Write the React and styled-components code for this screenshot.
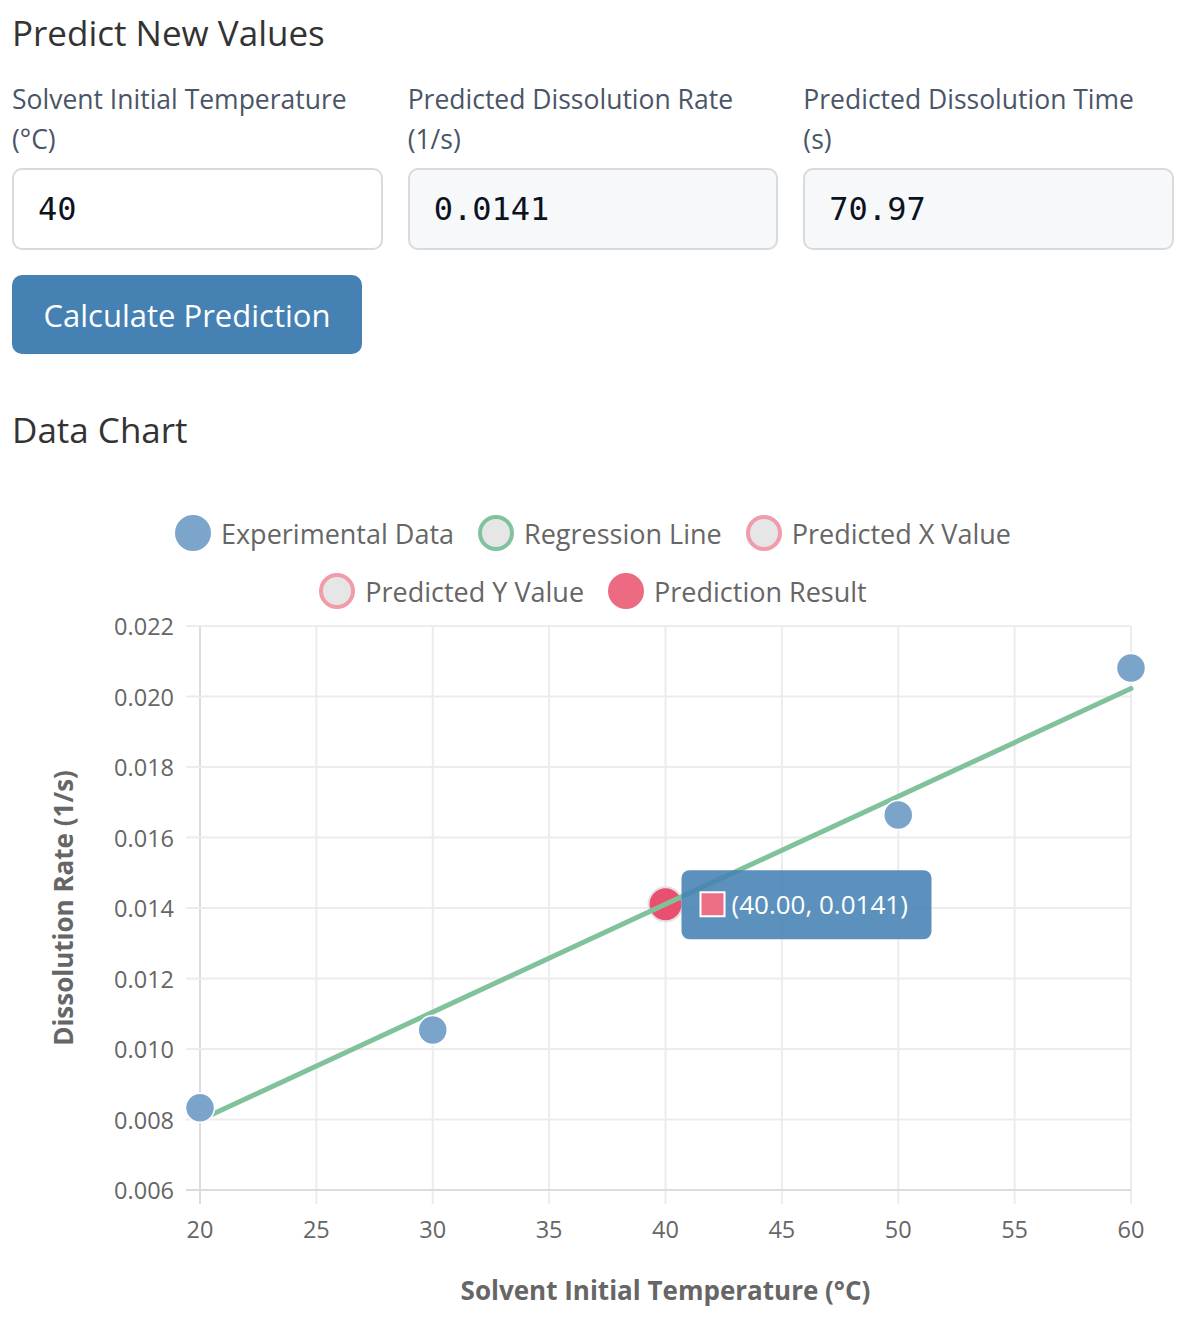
import React from 'react';
import styled, { createGlobalStyle } from 'styled-components';

const GlobalStyle = createGlobalStyle`
  body {
    margin: 0;
    background: #fff;
    font-family: 'Open Sans', 'Noto Sans', sans-serif;
  }
  * {
    box-sizing: border-box;
  }
`;

// chart geometry
const PLOT = { left: 200, right: 1131, top: 20, bottom: 584 };
const X_MIN = 20;
const X_MAX = 60;
const Y_MIN = 0.006;
const Y_MAX = 0.022;

const xScale = (v) => PLOT.left + ((v - X_MIN) / (X_MAX - X_MIN)) * (PLOT.right - PLOT.left);
const yScale = (v) => PLOT.bottom - ((v - Y_MIN) / (Y_MAX - Y_MIN)) * (PLOT.bottom - PLOT.top);

const experimental = [
  { x: 20, y: 0.00833 },
  { x: 30, y: 0.01054 },
  { x: 50, y: 0.01664 },
  { x: 60, y: 0.02081 }
];

const regression = { slope: 0.000306, intercept: 0.001866 };
const predictAt = (t) => regression.slope * t + regression.intercept;

const xTicks = [20, 25, 30, 35, 40, 45, 50, 55, 60];
const yTicks = [0.022, 0.02, 0.018, 0.016, 0.014, 0.012, 0.01, 0.008, 0.006];

const legendRows = [
  [
    { label: 'Experimental Data', fill: '#7ba5cb', stroke: '#7ba5cb' },
    { label: 'Regression Line', fill: '#e6e6e6', stroke: '#80c29c' },
    { label: 'Predicted X Value', fill: '#e6e6e6', stroke: '#f09cab' }
  ],
  [
    { label: 'Predicted Y Value', fill: '#e6e6e6', stroke: '#f09cab' },
    { label: 'Prediction Result', fill: '#ec6b82', stroke: '#ec6b82' }
  ]
];

export default function App() {
  const temperature = 40;
  const rate = predictAt(temperature);

  return (
    <Page>
      <GlobalStyle />
      <Title>Predict New Values</Title>
      <FieldGrid>
        <Field>
          <Label>Solvent Initial Temperature (°C)</Label>
          <Input defaultValue="40" />
        </Field>
        <Field>
          <Label>Predicted Dissolution Rate (1/s)</Label>
          <Input $readOnly readOnly value={rate.toFixed(4)} />
        </Field>
        <Field>
          <Label>Predicted Dissolution Time (s)</Label>
          <Input $readOnly readOnly value="70.97" />
        </Field>
      </FieldGrid>
      <PrimaryButton>Calculate Prediction</PrimaryButton>

      <SectionTitle>Data Chart</SectionTitle>
      <ChartBox>
        <Legend>
          {legendRows.map((row, i) => (
            <LegendRow key={i} $last={i === legendRows.length - 1}>
              {row.map((item) => (
                <LegendItem key={item.label}>
                  <LegendDot style={{ background: item.fill, borderColor: item.stroke }} />
                  {item.label}
                </LegendItem>
              ))}
            </LegendRow>
          ))}
        </Legend>
        <ScatterChart temperature={temperature} rate={rate} />
      </ChartBox>
    </Page>
  );
}

function ScatterChart({ temperature, rate }) {
  const px = xScale(temperature);
  const py = yScale(rate);

  return (
    <ChartSvg width="1186" height="724" viewBox="0 0 1186 724">
      {/* grid */}
      {xTicks.map((t) => (
        <line
          key={`gx${t}`}
          x1={xScale(t)}
          x2={xScale(t)}
          y1={PLOT.top}
          y2={PLOT.bottom + 14}
          stroke={t === X_MIN ? '#dcdcdc' : '#ececec'}
          strokeWidth="2"
        />
      ))}
      {yTicks.map((t) => (
        <line
          key={`gy${t}`}
          x1={PLOT.left - 14}
          x2={PLOT.right}
          y1={yScale(t)}
          y2={yScale(t)}
          stroke={t === Y_MIN ? '#dcdcdc' : '#ececec'}
          strokeWidth="2"
        />
      ))}

      {/* tick labels */}
      {yTicks.map((t) => (
        <TickText key={`ly${t}`} x="174" y={yScale(t)} textAnchor="end" dominantBaseline="central">
          {t.toFixed(3)}
        </TickText>
      ))}
      {xTicks.map((t) => (
        <TickText key={`lx${t}`} x={xScale(t)} y="623" textAnchor="middle" dominantBaseline="central">
          {t}
        </TickText>
      ))}

      <AxisTitle x={(PLOT.left + PLOT.right) / 2} y="684" textAnchor="middle" dominantBaseline="central">
        Solvent Initial Temperature (°C)
      </AxisTitle>
      <AxisTitle
        x="0"
        y="0"
        textAnchor="middle"
        dominantBaseline="central"
        transform="translate(63 302) rotate(-90)"
      >
        Dissolution Rate (1/s)
      </AxisTitle>

      {/* prediction point sits under the line */}
      <circle cx={px} cy={py} r="17" fill="#e9506f" stroke="#e2e2e2" strokeWidth="2" />

      {/* regression line */}
      <line
        x1={xScale(X_MIN)}
        y1={yScale(predictAt(X_MIN))}
        x2={xScale(X_MAX)}
        y2={yScale(predictAt(X_MAX))}
        stroke="#80c29c"
        strokeWidth="5"
        strokeLinecap="round"
      />

      {experimental.map((p) => (
        <circle
          key={p.x}
          cx={xScale(p.x)}
          cy={yScale(p.y)}
          r="14.5"
          fill="#7aa4ca"
          stroke="#fff"
          strokeWidth="1.5"
        />
      ))}

      {/* tooltip */}
      <g>
        <rect x={px + 16} y={py - 34} width="250" height="69" rx="8" fill="rgba(70,130,180,0.88)" />
        <rect x={px + 35} y={py - 12} width="24" height="24" fill="#ec6f86" stroke="#fff" strokeWidth="2" />
        <TooltipText x={px + 66} y={py} dominantBaseline="central">
          ({temperature.toFixed(2)}, {rate.toFixed(4)})
        </TooltipText>
      </g>
    </ChartSvg>
  );
}

const Page = styled.div`
  width: 1186px;
  padding: 13px 12px 0;
`;

const Title = styled.h2`
  margin: 0;
  font-size: 35px;
  line-height: 40px;
  font-weight: 400;
  color: #333;
`;

const FieldGrid = styled.div`
  display: grid;
  grid-template-columns: repeat(3, 1fr);
  gap: 25px;
  margin-top: 26px;
`;

const Field = styled.div`
  display: flex;
  flex-direction: column;
  gap: 9px;
`;

const Label = styled.label`
  font-size: 26.5px;
  line-height: 40px;
  color: #4a5568;
  padding-right: 14px;
`;

const Input = styled.input`
  height: 82px;
  width: 100%;
  padding: 0 24px;
  border: 2px solid #d7dade;
  border-radius: 10px;
  background: ${(p) => (p.$readOnly ? '#f7f8fa' : '#fff')};
  font-family: 'DejaVu Sans Mono', monospace;
  font-size: 32px;
  color: #0b1220;
  outline: none;
`;

const PrimaryButton = styled.button`
  margin-top: 25px;
  height: 79px;
  width: 350px;
  border: none;
  border-radius: 10px;
  background: #4681b4;
  color: #fff;
  font-family: 'Open Sans', 'Noto Sans', sans-serif;
  font-size: 31px;
  cursor: pointer;
`;

const SectionTitle = styled.h2`
  margin: 54px 0 0;
  font-size: 35px;
  line-height: 44px;
  font-weight: 400;
  color: #333;
`;

const ChartBox = styled.div`
  margin: 52px -12px 0;
`;

const Legend = styled.div`
  display: flex;
  flex-direction: column;
`;

const LegendRow = styled.div`
  display: flex;
  justify-content: center;
  align-items: center;
  gap: 24px;
  height: 58px;
  margin-bottom: ${(p) => (p.$last ? '-14px' : '0')};
`;

const LegendItem = styled.div`
  display: flex;
  align-items: center;
  gap: 10px;
  font-family: 'Open Sans', 'Noto Sans', sans-serif;
  font-size: 27px;
  color: #666;
`;

const LegendDot = styled.span`
  width: 36px;
  height: 36px;
  border-radius: 50%;
  border: 4px solid;
`;

const ChartSvg = styled.svg`
  display: block;
  overflow: visible;
`;

const TickText = styled.text`
  font-family: 'Open Sans', 'Noto Sans', sans-serif;
  font-size: 23.5px;
  fill: #666;
`;

const AxisTitle = styled.text`
  font-family: 'Open Sans', 'Noto Sans', sans-serif;
  font-size: 26px;
  font-weight: 700;
  fill: #666;
`;

const TooltipText = styled.text`
  font-family: 'Open Sans', 'Noto Sans', sans-serif;
  font-size: 26px;
  fill: #fff;
`;
